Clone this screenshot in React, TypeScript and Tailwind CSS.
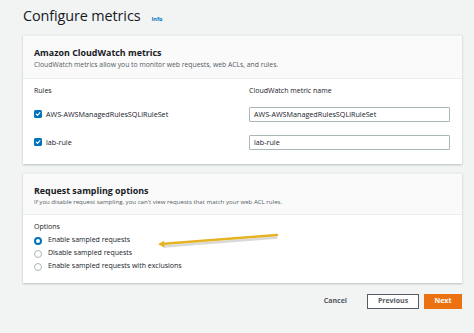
import React from 'react';

const font = { fontFamily: '"Open Sans", "Noto Sans", sans-serif' };

const Checkbox = () => (
  <span className="w-[8px] h-[8px] rounded-[1.5px] bg-[#0073bb] flex items-center justify-center shrink-0">
    <svg width="6" height="6" viewBox="0 0 10 10">
      <path d="M2 5.2 L4.2 7.4 L8.2 2.6" fill="none" stroke="white" strokeWidth="1.8" strokeLinecap="round" strokeLinejoin="round" />
    </svg>
  </span>
);

const Radio = ({ checked }: { checked?: boolean }) =>
  checked ? (
    <span className="w-[8px] h-[8px] rounded-full border-[2.5px] border-[#0073bb] bg-white shrink-0" />
  ) : (
    <span className="w-[8px] h-[8px] rounded-full border border-[#aab7b8] bg-white shrink-0" />
  );

const rules = ['AWS-AWSManagedRulesSQLiRuleSet', 'lab-rule'];

const options = [
  { label: 'Enable sampled requests', checked: true },
  { label: 'Disable sampled requests' },
  { label: 'Enable sampled requests with exclusions' },
];

export default function App() {
  return (
    <div style={font} className="relative w-[474px] h-[333px] overflow-hidden bg-[#f2f3f3] text-[#16191f]">
      <div className="pl-[23px] pr-[12px]">
        <div className="flex items-baseline h-[35px] pt-[5px]">
          <h1 className="text-[14.4px] leading-[22px] text-[#16191f] tracking-[-0.1px]">Configure metrics</h1>
          <span className="ml-[11px] text-[5.5px] font-bold text-[#0073bb]">Info</span>
        </div>

        <div className="w-[439px] bg-white shadow-[0_1px_2px_rgba(0,28,36,0.25)] border-t border-[#eaeded]">
          <div className="h-[43px] bg-[#fafafa] border-b border-[#eaeded] px-[11px] pt-[10px]">
            <div className="text-[8.9px] font-bold leading-[14px]">Amazon CloudWatch metrics</div>
            <div className="text-[6.8px] leading-[10px] text-[#545b64]">
              CloudWatch metrics allow you to monitor web requests, web ACLs, and rules.
            </div>
          </div>
          <div className="pl-[11px] pr-[12px] pt-[7px] pb-[14px]">
            <div className="grid grid-cols-[215px_1fr] text-[7px] leading-[10px]">
              <div>Rules</div>
              <div>CloudWatch metric name</div>
            </div>
            <div className="mt-[11px] flex flex-col gap-[13px]">
              {rules.map((r) => (
                <div key={r} className="grid grid-cols-[215px_1fr] h-[15px] items-center">
                  <div className="flex items-center gap-[4px] text-[7.2px]">
                    <Checkbox />
                    <span>{r}</span>
                  </div>
                  <div className="h-[15px] border border-[#aab7b8] rounded-[1px] px-[4px] flex items-center text-[7.2px]">
                    {r}
                  </div>
                </div>
              ))}
            </div>
          </div>
        </div>

        <div className="mt-[9px] w-[439px] bg-white shadow-[0_1px_2px_rgba(0,28,36,0.25)] border-t border-[#eaeded]">
          <div className="h-[41px] bg-[#fafafa] border-b border-[#eaeded] px-[11px] pt-[10px]">
            <div className="text-[8.9px] font-bold leading-[13px]">Request sampling options</div>
            <div className="text-[6.1px] leading-[10px] text-[#545b64]">
              If you disable request sampling, you can't view requests that match your web ACL rules.
            </div>
          </div>
          <div className="px-[11px] pt-[7px] pb-[10px]">
            <div className="text-[7px] leading-[10px] mb-[2px]">Options</div>
            {options.map((o) => (
              <div key={o.label} className="flex items-center gap-[6px] h-[13px]">
                <Radio checked={o.checked} />
                <span className="text-[7px] font-medium">{o.label}</span>
              </div>
            ))}
          </div>
        </div>

        <div className="mt-[11px] w-[439px] flex justify-end items-center gap-[5px]">
          <button className="h-[15px] px-[4px] mr-[11px] text-[7px] font-bold text-[#545b64]">Cancel</button>
          <button className="h-[15px] w-[52px] border border-[#545b64] bg-white text-[7px] font-bold text-[#545b64]">
            Previous
          </button>
          <button className="h-[15px] w-[38px] bg-[#ec7211] text-[7px] font-bold text-white">Next</button>
        </div>
      </div>

      <svg className="absolute left-0 top-0 pointer-events-none" width="474" height="333">
        <line x1="163" y1="245" x2="277" y2="236" stroke="rgba(0,0,0,0.15)" strokeWidth="2.5" transform="translate(0.5,1.5)" />
        <line x1="161" y1="244" x2="277" y2="235" stroke="#e6b324" strokeWidth="2.5" strokeLinecap="round" />
        <path d="M158 244.3 L164 240.8 L164.6 247.6 Z" fill="#e6b324" />
      </svg>
    </div>
  );
}
